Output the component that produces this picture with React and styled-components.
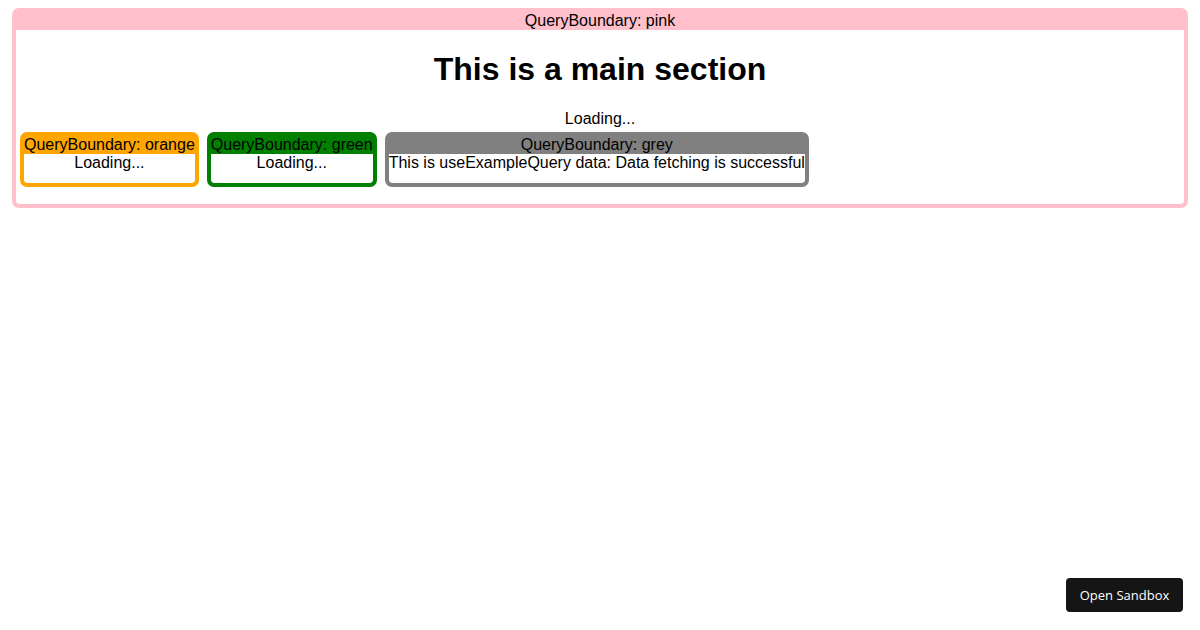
import React from "react";
import styled, { createGlobalStyle } from "styled-components";

const GlobalStyle = createGlobalStyle`
  body {
    margin: 8px;
    background: #ffffff;
    font-family: "Liberation Sans", Arial, sans-serif;
    font-size: 16px;
    color: #000000;
  }
`;

const Boundary = styled.div`
  margin: ${(p) => (p.$root ? "0 4px" : "4px")};
  border: 4px solid ${(p) => p.color};
  border-radius: 7px;
  background: ${(p) => p.color};
  overflow: hidden;
  text-align: center;
`;

const BoundaryTitle = styled.div`
  line-height: 18px;
  height: 18px;
`;

const BoundaryBody = styled.div`
  display: flow-root;
  background: #ffffff;
  border-radius: 0 0 3px 3px;
  padding-bottom: ${(p) => p.$pad || 11}px;
  line-height: 18px;
`;

const Heading = styled.h1`
  font-size: 32px;
  font-weight: bold;
  margin: 21px 0 22px;
  line-height: 37px;
`;

const Row = styled.div`
  display: flex;
  align-items: flex-start;
`;

const Message = styled.div`
  white-space: nowrap;
`;

const SandboxButton = styled.button`
  position: fixed;
  right: 17px;
  bottom: 18px;
  width: 117px;
  height: 34px;
  background: #151515;
  color: #ffffff;
  border: none;
  border-radius: 4px;
  font-family: "Open Sans", "Noto Sans", sans-serif;
  font-size: 13px;
  font-weight: 500;
  cursor: pointer;
`;

const QueryBoundary = ({ color, pad, root, children }) => (
  <Boundary color={color} $root={root}>
    <BoundaryTitle>QueryBoundary: {color}</BoundaryTitle>
    <BoundaryBody $pad={pad}>{children}</BoundaryBody>
  </Boundary>
);

const App = () => {
  return (
    <>
      <GlobalStyle />
      <QueryBoundary color="pink" pad={13} root>
        <Heading>This is a main section</Heading>
        <Message>Loading...</Message>
        <Row>
          <QueryBoundary color="orange">
            <Message>Loading...</Message>
          </QueryBoundary>
          <QueryBoundary color="green">
            <Message>Loading...</Message>
          </QueryBoundary>
          <QueryBoundary color="grey">
            <Message>
              This is useExampleQuery data: Data fetching is successful
            </Message>
          </QueryBoundary>
        </Row>
      </QueryBoundary>
      <SandboxButton>Open Sandbox</SandboxButton>
    </>
  );
};

export default App;
